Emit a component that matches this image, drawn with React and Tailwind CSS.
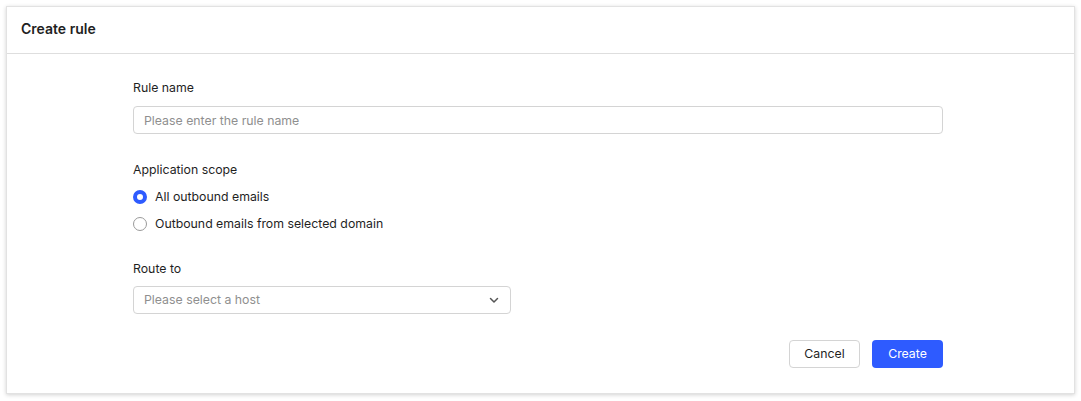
import React, { useState } from 'react';

const Radio = ({ checked, label, onClick }) => (
  <label className="flex items-center gap-[8px] h-[20px] cursor-pointer" onClick={onClick}>
    <span
      className={`w-[14px] h-[14px] rounded-full box-border ${
        checked ? 'border-[4px] border-[#2e5bff] bg-white' : 'border border-[#9a9a9a] bg-white'
      }`}
    />
    <span className="text-[12.3px] text-[#1f1f1f]">{label}</span>
  </label>
);

export default function App() {
  const [scope, setScope] = useState('all');

  return (
    <div className="w-[1081px] h-[401px] bg-white p-[6px] font-['Inter','Liberation_Sans',sans-serif]">
      <div className="h-[388px] bg-white border border-[#e2e2e2] shadow-[0_1px_4px_rgba(0,0,0,0.18)] flex flex-col">
        {/* Header */}
        <div className="h-[47px] flex items-center px-[14px] pb-[4px] border-b border-[#dedede]">
          <h2 className="text-[14px] font-semibold text-[#1f1f1f]">Create rule</h2>
        </div>

        {/* Body */}
        <div className="pl-[126px] pr-[131px] pt-[24px] flex flex-col">
          <div className="text-[12.3px] leading-[20px] text-[#1f1f1f]">Rule name</div>
          <input
            className="mt-[8px] h-[28px] w-full rounded-[4px] border border-[#d4d4d4] px-[10px] text-[12.3px] text-[#1f1f1f] placeholder:text-[#8f8f8f] outline-none"
            placeholder="Please enter the rule name"
          />

          <div className="mt-[26px] text-[12.3px] leading-[20px] text-[#1f1f1f]">Application scope</div>
          <div className="mt-[7px] flex flex-col gap-[7px]">
            <Radio checked={scope === 'all'} label="All outbound emails" onClick={() => setScope('all')} />
            <Radio checked={scope === 'domain'} label="Outbound emails from selected domain" onClick={() => setScope('domain')} />
          </div>

          <div className="mt-[25px] text-[12.3px] leading-[20px] text-[#1f1f1f]">Route to</div>
          <div className="mt-[7px] h-[28px] w-[378px] rounded-[4px] border border-[#d4d4d4] px-[10px] flex items-center justify-between">
            <span className="text-[12.3px] text-[#8f8f8f]">Please select a host</span>
            <svg width="12" height="12" viewBox="0 0 12 12" fill="none">
              <path d="M2.5 4.5L6 8l3.5-3.5" stroke="#555" strokeWidth="1.5" strokeLinecap="round" strokeLinejoin="round" />
            </svg>
          </div>

          <div className="mt-[26px] flex justify-end gap-[12px]">
            <button className="h-[28px] w-[71px] rounded-[4px] border border-[#d4d4d4] bg-white text-[12.3px] text-[#1f1f1f]">
              Cancel
            </button>
            <button className="h-[28px] w-[71px] rounded-[4px] bg-[#2e5bff] text-[12.3px] text-white">
              Create
            </button>
          </div>
        </div>
      </div>
    </div>
  );
}
